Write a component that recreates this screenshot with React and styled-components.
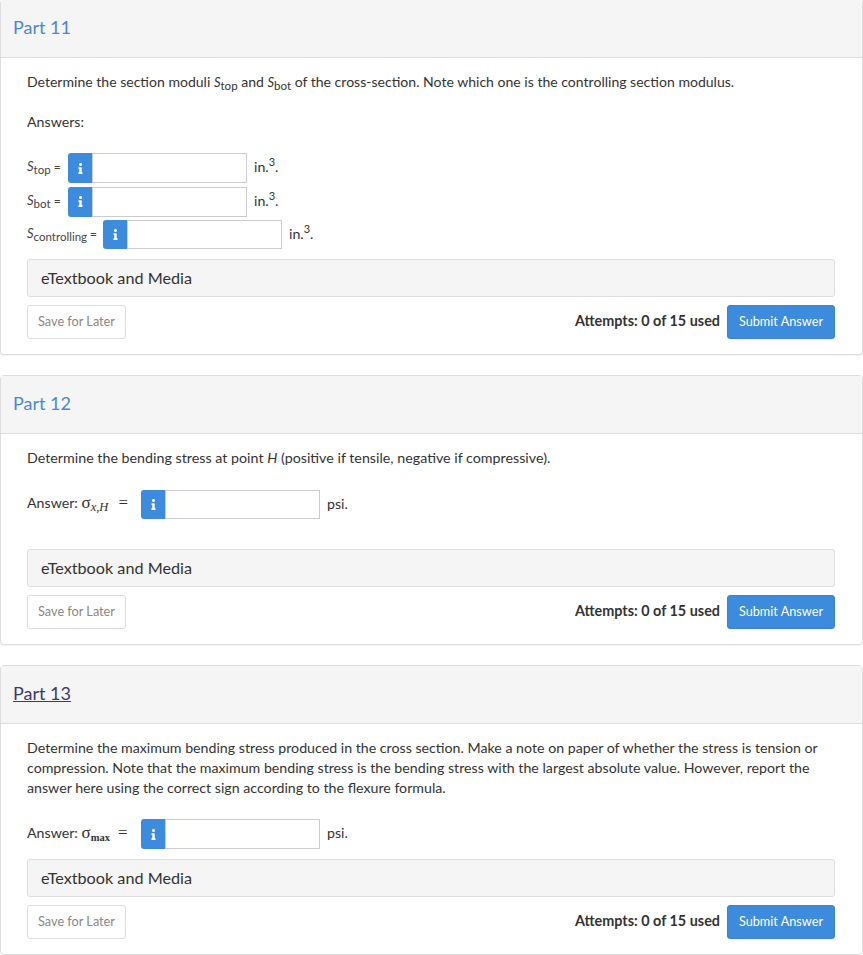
import React from 'react';
import styled, { createGlobalStyle } from 'styled-components';
import { FaInfo } from 'react-icons/fa';

const GlobalStyle = createGlobalStyle`
  html, body { margin: 0; padding: 0; background: #fff; }
  body {
    font-family: Lato, "Liberation Sans", sans-serif;
    font-size: 14.2px;
    line-height: 20px;
    color: #333;
  }
`;

const Panel = styled.section`
  border: 1px solid #ddd;
  border-top-width: ${({ $first }) => ($first ? 0 : 1)}px;
  border-radius: 4px;
  margin-bottom: 20px;
  width: 863px;
  box-sizing: border-box;
  background: #fff;
  box-shadow: 0 1px 1px rgba(0, 0, 0, 0.05);
`;

const PanelHeader = styled.header`
  height: 58px;
  box-sizing: border-box;
  background: #f5f5f5;
  border-bottom: 1px solid #ddd;
  padding: 17px 12px 0;
`;

const PartTitle = styled.a`
  display: block;
  font-size: 18px;
  line-height: 20px;
  color: ${({ $visited }) => ($visited ? '#3b3a6b' : '#4a87d6')};
  text-decoration: ${({ $visited }) => ($visited ? 'underline' : 'none')};
`;

const PanelBody = styled.div`
  padding: 14px 26px 15px;
`;

const Question = styled.p`
  margin: 0;
  font-size: ${({ $size }) => $size || 14.2}px;
  line-height: 20px;
  width: 800px;
`;

const AnswersLabel = styled.p`
  margin: 20px 0 21px;
`;

const Row = styled.div`
  display: flex;
  align-items: center;
  height: ${({ $h }) => $h || 30}px;
  margin-top: ${({ $mt }) => $mt || 0}px;
  margin-bottom: ${({ $mb }) => $mb ?? 3.5}px;
`;

const Label = styled.span`
  flex: none;
  width: ${({ $w }) => $w}px;
  margin-top: -3px;
  white-space: nowrap;
`;

const SmallLabel = styled(Label)`
  font-size: 12px;
  color: #444;
`;

const Var = styled.i`
  font-size: 13px;
`;

const Sub = styled.sub`
  font-size: 11.5px;
  line-height: 0;
  vertical-align: -3px;
`;

const MathSymbol = styled.span`
  font-family: "Liberation Serif", serif;
  font-size: 17px;
  color: #333;
`;

const MathSub = styled.sub`
  font-family: "Liberation Serif", serif;
  font-size: ${({ $bold }) => ($bold ? 10.5 : 12.5)}px;
  font-weight: ${({ $bold }) => ($bold ? 700 : 400)};
  font-style: ${({ $bold }) => ($bold ? 'normal' : 'italic')};
  line-height: 0;
  vertical-align: -3px;
`;

const Equals = styled.span`
  font-family: "Liberation Serif", serif;
  font-size: 17px;
  margin-left: ${({ $ml }) => $ml}px;
`;

const InfoButton = styled.button`
  flex: none;
  width: 24px;
  height: 100%;
  padding: 0;
  border: 0;
  border-radius: 3px 0 0 3px;
  background: #3c8bdc;
  color: #fff;
  display: flex;
  align-items: center;
  justify-content: center;
`;

const AnswerInput = styled.input`
  flex: none;
  box-sizing: border-box;
  width: ${({ $w }) => $w || 155}px;
  height: 100%;
  border: 1px solid #ccc;
  background: #fff;
  padding: 0;
  margin: 0;
`;

const Unit = styled.span`
  margin-left: 7px;
  margin-top: -2px;
`;

const UnitSup = styled.sup`
  font-size: 11px;
  line-height: 0;
  vertical-align: 6px;
`;

const MediaBox = styled.div`
  box-sizing: border-box;
  height: 38px;
  width: 808px;
  margin-top: ${({ $mt }) => $mt}px;
  padding: 8px 13px;
  font-size: 16.2px;
  line-height: 20px;
  color: #333;
  background: #f5f5f5;
  border: 1px solid #ddd;
  border-radius: 3px;
`;

const Footer = styled.div`
  display: flex;
  align-items: center;
  justify-content: space-between;
  width: 808px;
  margin-top: 8px;
`;

const SaveButton = styled.button`
  box-sizing: border-box;
  width: 99px;
  height: 34px;
  padding: 0 0 2px;
  font-family: inherit;
  font-size: 12.7px;
  color: #888;
  background: #fff;
  border: 1px solid #ddd;
  border-radius: 3px;
`;

const SubmitGroup = styled.div`
  display: flex;
  align-items: center;
  gap: 7px;
`;

const Attempts = styled.strong`
  margin-top: -2px;
  font-size: 14.4px;
  font-weight: 700;
  color: #333;
`;

const SubmitButton = styled.button`
  box-sizing: border-box;
  width: 108px;
  height: 34px;
  padding: 0 0 2px;
  font-family: inherit;
  font-size: 12.7px;
  color: #fff;
  background: #3c8bdc;
  border: 1px solid #3a85d2;
  border-radius: 3px;
`;

const Info = () => (
  <InfoButton type="button">
    <FaInfo size={11} />
  </InfoButton>
);

const Part = ({ title, first, visited, mediaGap, children }) => (
  <Panel $first={first}>
    <PanelHeader>
      <PartTitle $visited={visited}>{title}</PartTitle>
    </PanelHeader>
    <PanelBody>
      {children}
      <MediaBox $mt={mediaGap}>eTextbook and Media</MediaBox>
      <Footer>
        <SaveButton type="button">Save for Later</SaveButton>
        <SubmitGroup>
          <Attempts>Attempts: 0 of 15 used</Attempts>
          <SubmitButton type="button">Submit Answer</SubmitButton>
        </SubmitGroup>
      </Footer>
    </PanelBody>
  </Panel>
);

const SectionRow = ({ name, labelWidth, inputWidth, last }) => (
  <Row $mb={last ? 0 : undefined} $h={last ? 29 : 30}>
    <SmallLabel $w={labelWidth}>
      <Var>S</Var>
      <Sub>{name}</Sub> =
    </SmallLabel>
    <Info />
    <AnswerInput $w={inputWidth} />
    <Unit>
      in.<UnitSup>3</UnitSup>.
    </Unit>
  </Row>
);

const StressRow = ({ symbol, bold, equalsGap, height, marginTop }) => (
  <Row $h={height} $mt={marginTop} $mb={0}>
    <Label $w={114}>
      Answer: <MathSymbol>σ</MathSymbol>
      <MathSub $bold={bold}>{symbol}</MathSub>
      <Equals $ml={equalsGap}>=</Equals>
    </Label>
    <Info />
    <AnswerInput />
    <Unit>psi.</Unit>
  </Row>
);

const App = () => (
  <>
    <GlobalStyle />
    <Part title="Part 11" first mediaGap={10}>
      <Question $size={14.05}>
        Determine the section moduli <Var>S</Var>
        <Sub>top</Sub> and <Var>S</Var>
        <Sub>bot</Sub> of the cross-section. Note which one is the controlling section modulus.
      </Question>
      <AnswersLabel>Answers:</AnswersLabel>
      <SectionRow name="top" labelWidth={41} />
      <SectionRow name="bot" labelWidth={41} />
      <SectionRow name="controlling" labelWidth={76} last />
    </Part>
    <Part title="Part 12" mediaGap={30}>
      <Question $size={14.28}>
        Determine the bending stress at point <i>H</i> (positive if tensile, negative if compressive).
      </Question>
      <StressRow symbol="x,H" equalsGap={10} height={29} marginTop={22} />
    </Part>
    <Part title="Part 13" visited mediaGap={10}>
      <Question>
        Determine the maximum bending stress produced in the cross section. Make a note on paper of whether the stress is tension or compression. Note that the maximum bending stress is the bending stress with the largest absolute value. However, report the answer here using the correct sign according to the flexure formula.
      </Question>
      <StressRow symbol="max" bold equalsGap={8} height={30} marginTop={21} />
    </Part>
  </>
);

export default App;
